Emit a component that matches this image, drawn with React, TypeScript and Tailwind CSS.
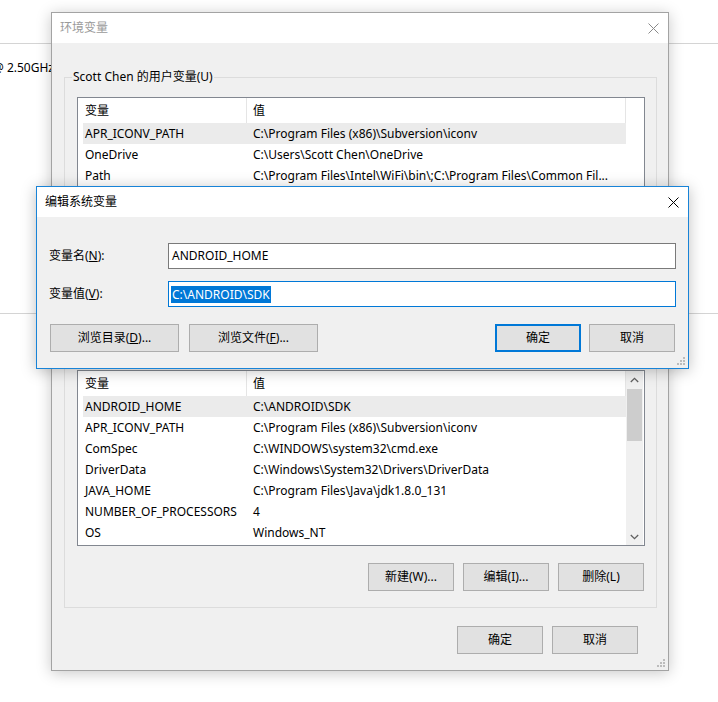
import React from "react";

const F = "font-['Noto_Sans','Noto_Sans_CJK_SC',sans-serif]";

function CloseX({ color }: { color: string }) {
  return (
    <svg width="11" height="11" viewBox="0 0 11 11">
      <path d="M0.5 0.5 L10.5 10.5 M10.5 0.5 L0.5 10.5" stroke={color} strokeWidth="1" fill="none" />
    </svg>
  );
}

function Grip() {
  const pts = [
    [6, 0],
    [3, 3],
    [6, 3],
    [0, 6],
    [3, 6],
    [6, 6],
  ];
  return (
    <svg width="8" height="8" viewBox="0 0 8 8">
      {pts.map(([x, y], i) => (
        <rect key={i} x={x} y={y} width="2" height="2" fill="#bcbcbc" />
      ))}
    </svg>
  );
}

function Btn({
  children,
  className = "",
  primary = false,
}: {
  children: React.ReactNode;
  className?: string;
  primary?: boolean;
}) {
  return (
    <div
      className={`h-[28px] flex items-center justify-center bg-[#e1e1e1] text-[12px] text-black ${
        primary ? "border-2 border-[#0078d7]" : "border border-[#adadad]"
      } ${className}`}
    >
      {children}
    </div>
  );
}

type Row = [string, string];

function ListView({
  rows,
  selected,
  scroll,
  className = "",
}: {
  rows: Row[];
  selected: number;
  scroll: boolean;
  className?: string;
}) {
  return (
    <div className={`border border-[#828790] bg-white flex overflow-hidden ${className}`}>
      <div className="w-[548px] flex flex-col shrink-0">
        <div className="h-[25px] flex shrink-0">
          <div className="w-[169px] pl-[7px] flex items-center border-r border-[#e5e5e5]">变量</div>
          <div className="w-[379px] pl-[6px] flex items-center border-r border-[#e5e5e5]">值</div>
        </div>
        {rows.map(([k, v], i) => (
          <div key={i} className="h-[21px] pl-[5px] flex shrink-0">
            <div className={`w-[543px] flex ${i === selected ? "bg-[#ebebeb]" : ""}`}>
              <div className="w-[164px] pl-[2px] flex items-center whitespace-nowrap overflow-hidden">{k}</div>
              <div className="flex-1 pl-[6px] flex items-center whitespace-nowrap overflow-hidden">{v}</div>
            </div>
          </div>
        ))}
      </div>
      {scroll ? (
        <div className="w-[17px] bg-[#f0f0f0] flex flex-col shrink-0">
          <div className="h-[17px] flex items-center justify-center">
            <svg width="9" height="6" viewBox="0 0 9 6">
              <path d="M0.8 5 L4.5 1.3 L8.2 5" stroke="#606060" strokeWidth="1.3" fill="none" />
            </svg>
          </div>
          <div className="h-[52px] mt-[1px] mx-[1px] bg-[#cdcdcd]" />
          <div className="flex-1" />
          <div className="h-[17px] flex items-center justify-center">
            <svg width="9" height="6" viewBox="0 0 9 6">
              <path d="M0.8 1 L4.5 4.7 L8.2 1" stroke="#606060" strokeWidth="1.3" fill="none" />
            </svg>
          </div>
        </div>
      ) : (
        <div className="flex-1" />
      )}
    </div>
  );
}

const userRows: Row[] = [
  ["APR_ICONV_PATH", "C:\\Program Files (x86)\\Subversion\\iconv"],
  ["OneDrive", "C:\\Users\\Scott Chen\\OneDrive"],
  ["Path", "C:\\Program Files\\Intel\\WiFi\\bin\\;C:\\Program Files\\Common Fil..."],
];

const sysRows: Row[] = [
  ["ANDROID_HOME", "C:\\ANDROID\\SDK"],
  ["APR_ICONV_PATH", "C:\\Program Files (x86)\\Subversion\\iconv"],
  ["ComSpec", "C:\\WINDOWS\\system32\\cmd.exe"],
  ["DriverData", "C:\\Windows\\System32\\Drivers\\DriverData"],
  ["JAVA_HOME", "C:\\Program Files\\Java\\jdk1.8.0_131"],
  ["NUMBER_OF_PROCESSORS", "4"],
  ["OS", "Windows_NT"],
];

export default function App() {
  return (
    <div className={`relative w-[718px] h-[702px] bg-white overflow-hidden text-[12px] text-black ${F}`}>
      {/* background page */}
      <div className="flex flex-col">
        <div className="mt-[43px] h-px bg-[#d4d4d4]" />
        <div className="mt-[15px] h-[18px] flex items-center whitespace-nowrap ml-[-7px]">@ 2.50GHz</div>
        <div className="mt-[236px] h-px bg-[#d4d4d4]" />
      </div>

      {/* Environment variables window */}
      <div className="absolute left-[51px] top-[12px] w-[618px] h-[659px] border border-[#a3a3a3] bg-[#f0f0f0] flex flex-col shadow-[0_2px_14px_rgba(0,0,0,0.22)]">
        <div className="h-[30px] bg-white flex items-center justify-between pl-[8px] pr-[9px] shrink-0">
          <span className="text-[#9a9a9a]">环境变量</span>
          <CloseX color="#8a8a8a" />
        </div>
        <div className="flex-1 flex flex-col pl-[12px] pr-[11px]">
          {/* user group */}
          <div className="relative mt-[34px] h-[256px] border border-[#dcdcdc] pt-[19px] pl-[12px] pr-[11px] flex flex-col">
            <span className="absolute top-[-9px] left-[7px] px-[1px] bg-[#f0f0f0] leading-[16px]">
              Scott Chen 的用户变量(U)
            </span>
            <ListView rows={userRows} selected={0} scroll={false} className="h-[180px]" />
          </div>
          {/* system group */}
          <div className="relative mt-[12px] border border-[#dcdcdc] pt-[24px] pl-[12px] pr-[11px] pb-[16px] flex flex-col">
            <ListView rows={sysRows} selected={0} scroll={true} className="h-[176px]" />
            <div className="mt-[17px] flex justify-end gap-[9px] pr-[1px]">
              <Btn className="w-[86px]">新建(W)...</Btn>
              <Btn className="w-[86px]">编辑(I)...</Btn>
              <Btn className="w-[86px]">删除(L)</Btn>
            </div>
          </div>
          <div className="mt-[18px] flex justify-end gap-[9px] pr-[19px]">
            <Btn className="w-[86px]">确定</Btn>
            <Btn className="w-[86px]">取消</Btn>
          </div>
        </div>
        <div className="absolute right-[3px] bottom-[3px]">
          <Grip />
        </div>
      </div>

      {/* Edit system variable dialog */}
      <div className="absolute left-[36px] top-[186px] w-[653px] h-[183px] border border-[#1883d7] bg-[#f0f0f0] flex flex-col shadow-[0_2px_14px_rgba(0,0,0,0.25)]">
        <div className="h-[30px] bg-white flex items-center justify-between pl-[8px] pr-[9px] shrink-0">
          <span>编辑系统变量</span>
          <CloseX color="#000000" />
        </div>
        <div className="flex-1 flex flex-col pl-[12px] pr-[12px] pt-[26px]">
          <div className="flex items-center h-[26px]">
            <div className="w-[119px]">
              变量名(<u>N</u>):
            </div>
            <div className="w-[508px] h-[26px] border border-[#7a7a7a] bg-white flex items-center pl-[3px]">
              ANDROID_HOME
            </div>
          </div>
          <div className="mt-[12px] flex items-center h-[26px]">
            <div className="w-[119px]">
              变量值(<u>V</u>):
            </div>
            <div className="w-[508px] h-[26px] border border-[#0078d7] bg-white flex items-center pl-[2px]">
              <span className="bg-[#0078d7] text-white h-[17px] leading-[17px] px-[1px]">C:\ANDROID\SDK</span>
            </div>
          </div>
          <div className="mt-[17px] flex items-center">
            <Btn className="w-[129px] ml-[1px]">
              浏览目录(<u>D</u>)...
            </Btn>
            <Btn className="w-[129px] ml-[10px]">
              浏览文件(<u>F</u>)...
            </Btn>
            <div className="flex-1" />
            <Btn className="w-[86px]" primary>
              确定
            </Btn>
            <Btn className="w-[86px] ml-[8px] mr-[1px]">取消</Btn>
          </div>
        </div>
        <div className="absolute right-[3px] bottom-[3px]">
          <Grip />
        </div>
      </div>
    </div>
  );
}
